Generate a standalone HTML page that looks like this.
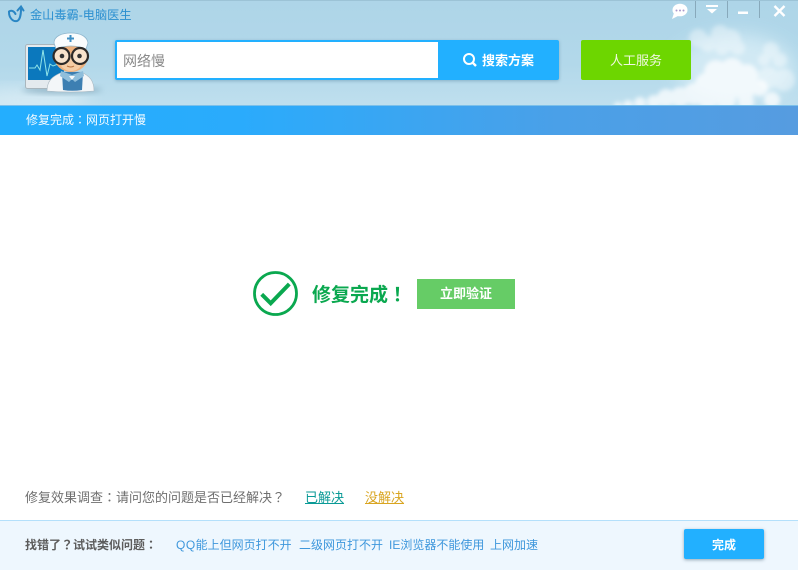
<!DOCTYPE html>
<html><head><meta charset="utf-8">
<style>
*{margin:0;padding:0;box-sizing:border-box}
html,body{width:798px;height:570px;overflow:hidden;background:#fff}
body{position:relative;font-family:"Liberation Sans","Noto Sans CJK SC",sans-serif;font-size:12px}
.a{position:absolute;white-space:nowrap}
.p{font-family:"Noto Sans CJK TC",sans-serif}
#hd{left:0;top:0;width:798px;height:106px;overflow:hidden;background:linear-gradient(180deg,#aed5e8 0,#b2d8ea 60%,#bfdfee 100%);border-top:1px solid #9cc3d6}
#hd svg{position:absolute;left:0;top:-1px}
</style></head><body>
<div class="a" id="hd">
<svg width="798" height="107" viewBox="0 0 798 107">
<defs><filter id="b" x="-30%" y="-30%" width="160%" height="160%"><feGaussianBlur stdDeviation="2"/></filter>
<filter id="s" x="-30%" y="-30%" width="160%" height="160%"><feGaussianBlur stdDeviation="3"/></filter>
<filter id="b2" x="-30%" y="-30%" width="160%" height="160%"><feGaussianBlur stdDeviation="9"/></filter></defs>
<ellipse cx="735" cy="68" rx="60" ry="34" fill="#d9eef7" opacity=".8" filter="url(#b2)"/>
<ellipse cx="30" cy="100" rx="60" ry="12" fill="#fff" opacity=".4" filter="url(#b2)"/>
<g fill="#fff" filter="url(#b)">
<g opacity=".38">
<circle cx="698" cy="38" r="9"/><circle cx="708" cy="44" r="8"/>
<circle cx="720" cy="34" r="9"/><circle cx="730" cy="40" r="11"/><circle cx="738" cy="48" r="7"/><circle cx="722" cy="48" r="7"/>
<circle cx="771" cy="50" r="8"/><circle cx="780" cy="60" r="7"/><circle cx="764" cy="60" r="6"/>
<circle cx="784" cy="80" r="11"/><circle cx="768" cy="78" r="11"/>
</g>
<g opacity=".72">
<circle cx="716" cy="72" r="12"/><circle cx="732" cy="70" r="12"/><circle cx="747" cy="75" r="11"/><circle cx="706" cy="84" r="11"/><circle cx="724" cy="86" r="14"/><circle cx="744" cy="88" r="12"/><circle cx="760" cy="88" r="8"/>
<circle cx="694" cy="94" r="11"/><circle cx="708" cy="98" r="11"/><circle cx="680" cy="97" r="10"/><circle cx="666" cy="98" r="9"/><circle cx="654" cy="102" r="7"/>
<circle cx="726" cy="100" r="10"/><circle cx="746" cy="102" r="8"/><circle cx="772" cy="100" r="8"/>
<circle cx="640" cy="103" r="6"/><circle cx="628" cy="105" r="5"/><circle cx="618" cy="106" r="4"/>
</g></g>
<ellipse cx="62" cy="90" rx="40" ry="4" fill="#6a93a8" opacity=".5" filter="url(#s)"/>
<!-- logo -->
<g fill="none" stroke="#2a86c4" stroke-width="2" stroke-linecap="round">
<path d="M9 11.500C11.500 10 14 11 15.500 14"/>
<path d="M9 12C9 18 13 22 17 21C20 20 21 14 21 9"/>
<path d="M17.500 10.500L21 6.500L23.500 10.500"/>
</g>
<!-- monitor -->
<rect x="25.500" y="44.500" width="32" height="44" rx="2" fill="#e4eaee" stroke="#a9b6bd"/>
<rect x="28" y="47" width="36" height="33" fill="#0b78bd"/>
<path d="M29 68h6l2-3 3 5 3-20 4 26 3-12 3 2 5-2h3" fill="none" stroke="#8fe4e8" stroke-width="1"/>
<!-- body -->
<path d="M47 91c0-10 5-15 16-19h18c9 4 13 9 13 19q-23 2-47 0z" fill="#f3f6f8" stroke="#aab8c1" stroke-width=".6"/>
<path d="M62 72l1 18q9 1.500 19 0l1-18z" fill="#3d7fb2"/>
<path d="M61 71l11 4 11-4 1 5-9 6-3-3-3 3-9-6z" fill="#8fbedb"/>
<path d="M69 76h6l-3 4z" fill="#f6fafc"/>
<!-- face -->
<ellipse cx="71" cy="56" rx="17" ry="16" fill="#eeb17d"/>
<ellipse cx="71" cy="62" rx="11" ry="9" fill="#f6cda4"/>
<path d="M54 43c0-7 8-10 17-10 9 0 16 3 17 10l-2 6c-9-4-21-4-30 0z" fill="#fafcfd" stroke="#8fb6cd" stroke-width=".8"/>
<path d="M67 38.500h7M70.500 35v7" stroke="#3e8fc4" stroke-width="2"/>
<circle cx="61.500" cy="56" r="8" fill="#f8e3cc" stroke="#2d2a28" stroke-width="2.200"/>
<circle cx="80" cy="56" r="8" fill="#f8e3cc" stroke="#2d2a28" stroke-width="2.200"/>
<circle cx="62" cy="56" r="2.300" fill="#333"/><circle cx="79.500" cy="56" r="2.300" fill="#333"/>
<path d="M67 66q4 2 7 0" fill="none" stroke="#b5713f"/>
<!-- window icons -->
<ellipse cx="680" cy="10" rx="7.500" ry="6.300" fill="#fff"/><path d="M674 13l-2 6 6-3z" fill="#fff"/>
<circle cx="676.500" cy="10.500" r="1" fill="#a9c"/><circle cx="680" cy="10.500" r="1" fill="#a9c"/><circle cx="683.500" cy="10.500" r="1" fill="#a9c"/>
<path d="M695.500 0v18M727.500 0v18M759.500 0v18" stroke="#7f9fb0" opacity=".8"/>
<path d="M706 5h12v2h-12z" fill="#fff"/><path d="M707 9h10l-5 4.500z" fill="#fff"/>
<path d="M738 11.500h10v2.500h-10z" fill="#fff"/>
<path d="M774.500 6l10 10M784.500 6l-10 10" stroke="#fff" stroke-width="2.400"/>
</svg>
</div>
<div class="a" style="left:30px;top:7px;font-size:12.200px;line-height:16px;color:#2a8fd0">金山毒霸-电脑医生</div>
<!-- search -->
<div class="a" style="left:115px;top:40px;width:444px;height:40px;background:#22b0ff;border-radius:2px;box-shadow:0 1px 3px rgba(60,110,140,.4)"></div>
<div class="a" style="left:117px;top:42px;width:321px;height:36px;background:#fff"></div>
<div class="a" style="left:123px;top:52px;font-size:14px;line-height:18px;color:#8a8a8a">网络慢</div>
<svg class="a" style="left:462px;top:52px" width="16" height="16" viewBox="0 0 16 16"><circle cx="7" cy="7" r="5" fill="none" stroke="#fff" stroke-width="2"/><path d="M10.500 10.500l3.500 3.500" stroke="#fff" stroke-width="2.400"/></svg>
<div class="a" style="left:482px;top:52px;font-size:13px;line-height:18px;font-weight:bold;color:#fff">搜索方案</div>
<div class="a" style="left:581px;top:40px;width:110px;height:40px;background:#6dd600;border-radius:2px;color:#f0f8e0;font-size:13px;line-height:42px;text-align:center">人工服务</div>
<!-- bar -->
<div class="a" style="left:0;top:105px;width:798px;height:30px;background:linear-gradient(90deg,#24aefe 0,#2aabfc 30%,#4aa0e8 70%,#569ce0 100%);border-top:1px solid #7cc0ea"></div>
<div class="a" style="left:26px;top:111px;font-size:12px;line-height:17px;color:#f2faff">修复完成<span class="p">：</span>网页打开慢</div>
<!-- center -->
<svg class="a" style="left:252px;top:270px" width="48" height="48" viewBox="0 0 48 48"><circle cx="23.500" cy="23.500" r="21" fill="none" stroke="#0aa84f" stroke-width="2.800"/><path d="M9.700 24.300l9 9 18.600-19.300" fill="none" stroke="#0aa84f" stroke-width="4"/></svg>
<div class="a" style="left:312px;top:282px;font-size:19px;line-height:24px;font-weight:bold;color:#0aa84f">修复完成<span class="p">！</span></div>
<div class="a" style="left:417px;top:279px;width:98px;height:30px;background:#66cc66;color:#fff;font-size:13px;font-weight:bold;line-height:30px;text-align:center">立即验证</div>
<!-- survey -->
<div class="a" style="left:25px;top:488px;font-size:13px;line-height:17px;color:#6f6f6f">修复效果调查<span class="p">：</span>请问您的问题是否已经解决<span class="p">？</span></div>
<div class="a" style="left:305px;top:489px;font-size:13px;line-height:17px;color:#0a9a96;text-decoration:underline">已解决</div>
<div class="a" style="left:365px;top:489px;font-size:13px;line-height:17px;color:#d9a521;text-decoration:underline">没解决</div>
<!-- footer -->
<div class="a" style="left:0;top:520px;width:798px;height:50px;background:#eef7fe;border-top:1px solid #b4e0fb"></div>
<div class="a" style="left:25px;top:537px;font-size:12px;line-height:16px;font-weight:bold;color:#5c5c5c">找错了<span class="p">？</span>试试类似问题<span class="p">：</span></div>
<div class="a" style="left:176px;top:537px;font-size:12px;line-height:17px;color:#3e97dc"><span style="letter-spacing:.5px">QQ</span>能上但网页打不开</div>
<div class="a" style="left:299px;top:537px;font-size:12px;line-height:17px;color:#3e97dc">二级网页打不开</div>
<div class="a" style="left:389px;top:537px;font-size:12px;line-height:17px;color:#3e97dc">IE浏览器不能使用</div>
<div class="a" style="left:490px;top:537px;font-size:12px;line-height:17px;color:#3e97dc">上网加速</div>
<div class="a" style="left:684px;top:529px;width:80px;height:30px;background:#22b0ff;border-radius:2px;box-shadow:0 1px 3px rgba(60,90,110,.5);color:#fff;font-size:12px;font-weight:bold;line-height:33px;text-align:center">完成</div>
</body></html>
